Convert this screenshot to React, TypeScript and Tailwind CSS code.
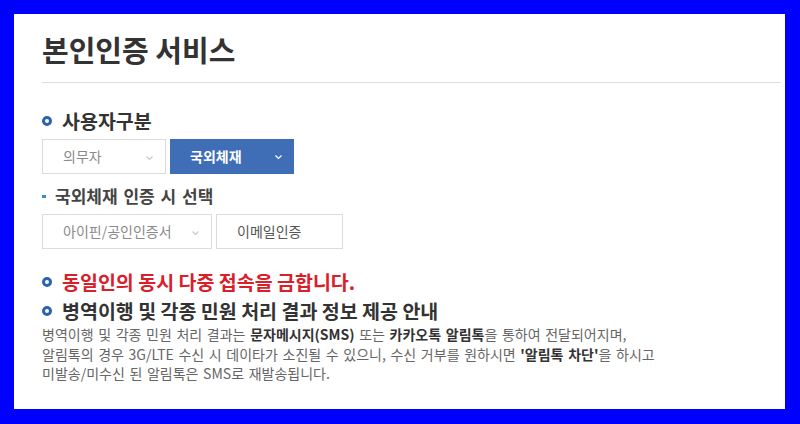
const font = "font-['Noto_Sans_CJK_KR','Noto_Sans',sans-serif]";

function Chevron({ className }: { className: string }) {
  return (
    <svg width="9" height="6" viewBox="0 0 9 6" className={className} fill="none">
      <polyline points="1.5,1.5 4.5,4.5 7.5,1.5" stroke="currentColor" strokeWidth="1.2" />
    </svg>
  );
}

function Ring() {
  return <span className="mr-[10px] inline-block h-[10px] w-[10px] shrink-0 rounded-full border-[3px] border-[#2c63ae]" />;
}

function SelectBox({ label, width, active, chevron }: { label: string; width: string; active?: boolean; chevron?: boolean }) {
  return (
    <div
      className={`relative flex h-[35px] items-center pl-[20px] text-[14px] ${width} ${
        active ? "bg-[#3f6db6] font-bold text-white" : "border border-[#dcdcdc] bg-white text-[#8a8a8a]"
      }`}
    >
      {label}
      {chevron && (
        <Chevron
          className={`absolute right-[11px] top-[15px] ${active ? "text-white" : "text-[#c8c8c8]"}`}
        />
      )}
    </div>
  );
}

export default function App() {
  return (
    <div className={`h-[424px] w-[800px] bg-[#0000ff] pb-[15px] pl-[14px] pr-[15px] pt-[14px] ${font}`}>
      <div className="h-full w-full bg-white pl-[28px] pr-[4px]">
        <div className="border-b border-[#dddddd] pb-[15px] pt-[17px]">
          <h1 className="text-[29px] font-bold leading-[36px] text-[#333]">본인인증 서비스</h1>
        </div>

        <h2 className="mt-[25px] flex items-center text-[19.5px] font-bold leading-[26px] text-[#333]">
          <Ring />
          사용자구분
        </h2>
        <div className="mt-[5px] flex gap-[4px]">
          <SelectBox label="의무자" width="w-[124px]" chevron />
          <SelectBox label="국외체재" width="w-[124px]" active chevron />
        </div>

        <h3 className="mt-[10px] flex items-center text-[17px] font-bold leading-[24px] text-[#444] [word-spacing:2px]">
          <span className="mr-[9px] inline-block h-[3px] w-[4px] bg-[#2f8fd8]" />
          국외체재 인증 시 선택
        </h3>
        <div className="mt-[6px] flex gap-[4px]">
          <SelectBox label="아이핀/공인인증서" width="w-[170px]" chevron />
          <div className="flex h-[35px] w-[127px] items-center border border-[#dcdcdc] pl-[20px] text-[14px] text-[#555]">
            이메일인증
          </div>
        </div>

        <h2 className="mt-[18px] flex items-center text-[19.5px] font-bold leading-[29px] text-[#d9202a]">
          <Ring />
          동일인의 동시 다중 접속을 금합니다.
        </h2>
        <h2 className="flex items-center text-[19.5px] font-bold leading-[29px] text-[#333]">
          <Ring />
          병역이행 및 각종 민원 처리 결과 정보 제공 안내
        </h2>
        <p className="text-[14px] leading-[19.5px] text-[#666] [word-spacing:1.5px]">
          병역이행 및 각종 민원 처리 결과는 <b className="font-semibold text-[#333]">문자메시지(SMS)</b> 또는{" "}
          <b className="font-semibold text-[#333]">카카오톡 알림톡</b>을 통하여 전달되어지며,
          <br />
          알림톡의 경우 3G/LTE 수신 시 데이타가 소진될 수 있으니, 수신 거부를 원하시면{" "}
          <b className="font-semibold text-[#333]">'알림톡 차단'</b>을 하시고
          <br />
          미발송/미수신 된 알림톡은 SMS로 재발송됩니다.
        </p>
      </div>
    </div>
  );
}
